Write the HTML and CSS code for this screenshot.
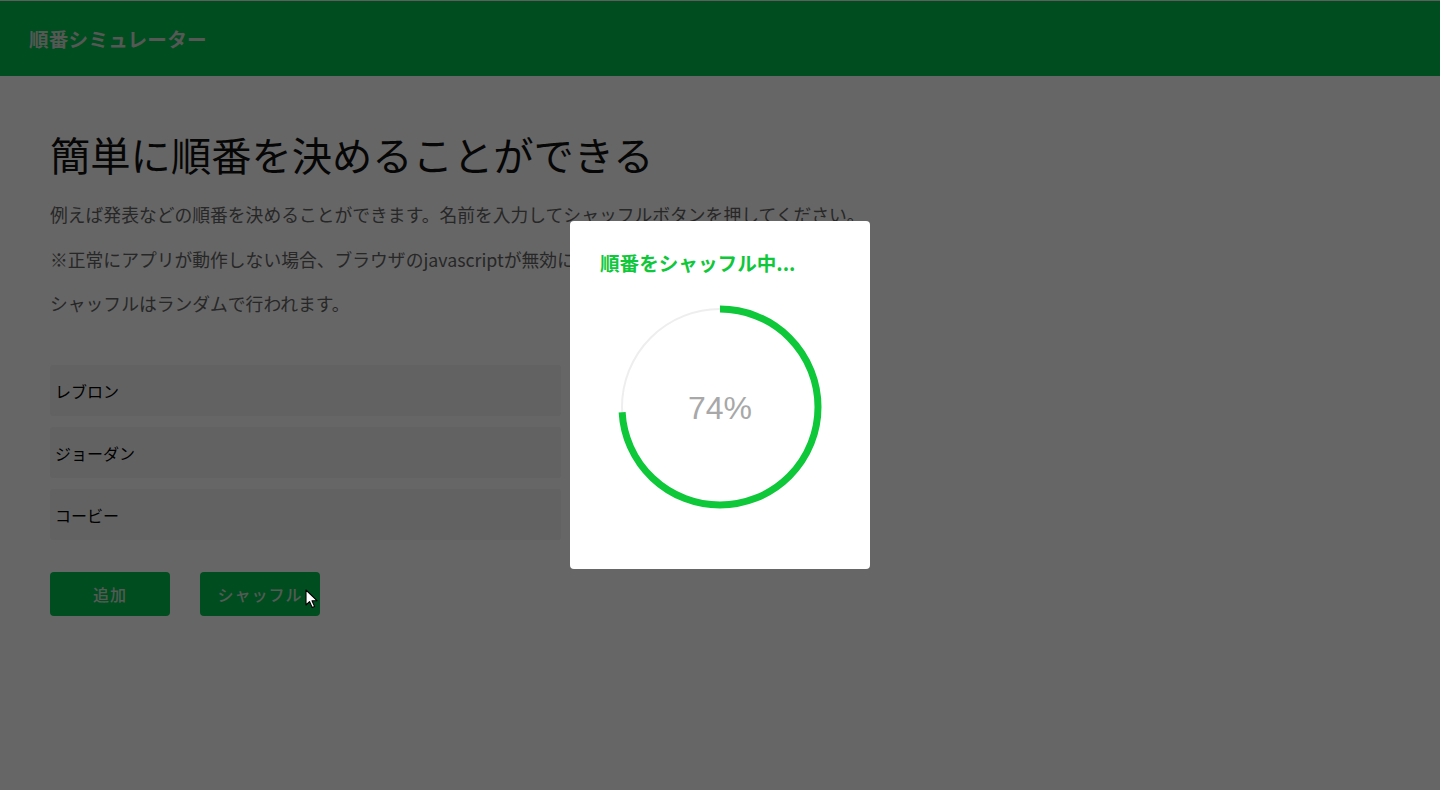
FILE: index.html
```html
<!DOCTYPE html>
<html lang="ja">
<head>
<meta charset="utf-8">
<title>順番シミュレーター</title>
<link rel="stylesheet" href="styles.css">
</head>
<body>
<header class="site-header">
  <div class="brand">順番シミュレーター</div>
</header>
<main class="main">
  <h1 class="title">簡単に順番を決めることができる</h1>
  <p class="lead first">例えば発表などの順番を決めることができます。名前を入力してシャッフルボタンを押してください。</p>
  <p class="lead">※正常にアプリが動作しない場合、ブラウザのjavascriptが無効になっている可能性があります。</p>
  <p class="lead">シャッフルはランダムで行われます。</p>
  <div class="names">
    <input class="name-input" type="text" value="レブロン">
    <input class="name-input" type="text" value="ジョーダン">
    <input class="name-input" type="text" value="コービー">
  </div>
  <div class="actions">
    <button class="btn">追加</button>
    <button class="btn">シャッフル</button>
  </div>
</main>
<div class="overlay">
  <div class="modal">
    <div class="modal-title">順番をシャッフル中...</div>
    <div class="progress">
      <svg class="ring" width="206" height="206" viewBox="0 0 206 206">
        <circle class="track" cx="103" cy="103" r="98"></circle>
        <circle class="bar" cx="103" cy="103" r="98"></circle>
      </svg>
      <div class="percent">74%</div>
    </div>
  </div>
  <svg class="cursor" width="14" height="20" viewBox="0 0 14 20">
    <path d="M1 1 L1 16 L4.5 12.6 L7.2 18.6 L9.6 17.5 L7 11.7 L12 11.7 Z" fill="#fff" stroke="#000" stroke-width="1.1" stroke-linejoin="round"/>
  </svg>
</div>
</body>
</html>
```
FILE: styles.css
```css
* { box-sizing: border-box; }
html, body { margin: 0; padding: 0; }
body {
  font-family: "Noto Sans CJK JP", "Noto Sans", sans-serif;
  background: #fff;
  color: #111;
  border-top: 1px solid #eaeaea;
}
.site-header {
  height: 75px;
  background: #00c050;
  display: flex;
  align-items: center;
  padding-left: 29px;
}
.brand {
  color: #d4dcd4;
  font-size: 19.6px;
  font-weight: 700;
  letter-spacing: 0.2px;
}
.main {
  padding: 50px 50px 0;
}
.title {
  margin: 0;
  font-size: 40.3px;
  line-height: 56px;
  font-weight: 400;
  color: #111;
}
.lead {
  margin: 0 0 18.5px;
  font-size: 17.8px;
  line-height: 26px;
  color: #626262;
}
.lead.first { margin-top: 19px; }
.names {
  margin-top: 49px;
  display: flex;
  flex-direction: column;
  gap: 11px;
}
.name-input {
  width: 511px;
  height: 51px;
  border: none;
  border-radius: 3px;
  background: #f5f5f5;
  padding: 0 5px;
  font-family: "Noto Sans CJK JP", sans-serif;
  font-size: 16px;
  color: #000;
}
.actions {
  margin-top: 32px;
  display: flex;
  gap: 30px;
}
.btn {
  width: 120px;
  height: 44px;
  border: none;
  border-radius: 4px;
  background: #00c050;
  color: #d2e0d4;
  font-family: "Noto Sans CJK JP", sans-serif;
  font-size: 16px;
  font-weight: 500;
  letter-spacing: 1px;
}
.overlay {
  position: fixed;
  inset: 0;
  background: rgba(0, 0, 0, 0.6);
  display: flex;
  align-items: center;
  justify-content: center;
}
.modal {
  width: 300px;
  height: 348px;
  background: #fff;
  border-radius: 4px;
  padding: 30px 30px 0;
}
.modal-title {
  color: #0ec83a;
  font-size: 19.6px;
  font-weight: 700;
  line-height: 24px;
}
.progress {
  position: relative;
  width: 206px;
  height: 206px;
  margin: 29px auto 0;
}
.ring { display: block; transform: rotate(-90deg); }
.track {
  fill: none;
  stroke: #eeeeee;
  stroke-width: 2;
}
.bar {
  fill: none;
  stroke: #0ec83a;
  stroke-width: 7;
  stroke-dasharray: 455.7 615.8;
}
.percent {
  position: absolute;
  inset: 0;
  display: flex;
  align-items: center;
  justify-content: center;
  font-family: "Liberation Sans", Arial, sans-serif;
  font-size: 32px;
  color: #a8a8a8;
  padding-top: 2px;
}
.cursor {
  position: absolute;
  left: 305px;
  top: 589px;
}
```
